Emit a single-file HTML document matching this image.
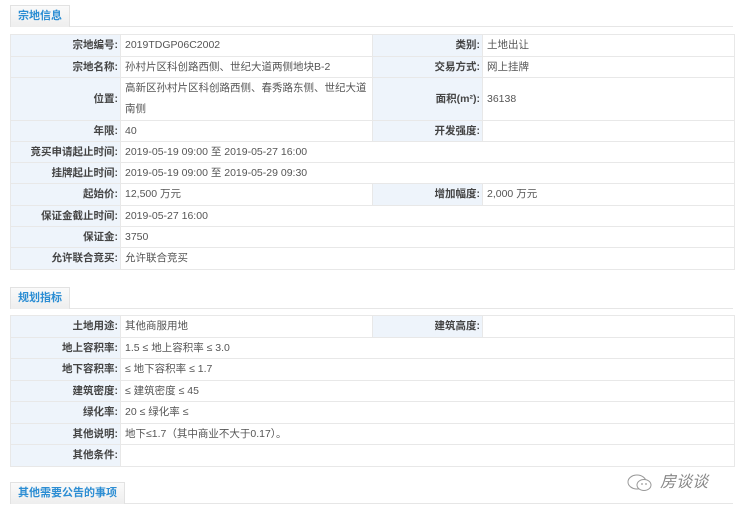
<!DOCTYPE html>
<html><head><meta charset="utf-8"><style>
*{margin:0;padding:0;box-sizing:border-box}
body{width:740px;height:515px;background:#fff;font-family:"Liberation Sans","Noto Sans CJK SC",sans-serif;font-size:10.5px;color:#555;position:relative;overflow:hidden}
.tabbar{position:absolute;left:10px;width:723px;height:22px;border-bottom:1px solid #e6e6e6}
.tab{position:absolute;left:0;top:0;height:22px;padding:0 7px;line-height:21px;background:linear-gradient(#fafafa,#eeeeee);border:1px solid #e2e2e2;border-bottom:none;color:#2b8dd3;font-weight:bold;font-size:11px}
table{position:absolute;left:10px;width:724px;border-collapse:collapse;table-layout:fixed}
td{border:1px solid #e8e8e8;padding:0 4px;line-height:20px;vertical-align:middle;overflow:hidden}
td.l{background:#eef4fb;text-align:right;font-weight:bold;color:#444;padding-right:2px}
td.v{color:#555}
</style></head><body>
<div class="tabbar" style="top:5px"><div class="tab">宗地信息</div></div>
<table style="top:34px">
<colgroup><col style="width:110px"><col style="width:252px"><col style="width:110px"><col style="width:252px"></colgroup>
<tr style="height:21.5px"><td class="l">宗地编号:</td><td class="v">2019TDGP06C2002</td><td class="l">类别:</td><td class="v">土地出让</td></tr>
<tr style="height:21px"><td class="l">宗地名称:</td><td class="v">孙村片区科创路西侧、世纪大道两侧地块B-2</td><td class="l">交易方式:</td><td class="v">网上挂牌</td></tr>
<tr style="height:43px"><td class="l">位置:</td><td class="v" style="line-height:21px">高新区孙村片区科创路西侧、春秀路东侧、世纪大道南侧</td><td class="l">面积(m²):</td><td class="v">36138</td></tr>
<tr style="height:21px"><td class="l">年限:</td><td class="v">40</td><td class="l">开发强度:</td><td class="v"></td></tr>
<tr style="height:21.5px"><td class="l">竞买申请起止时间:</td><td class="v" colspan="3">2019-05-19 09:00 至 2019-05-27 16:00</td></tr>
<tr style="height:21px"><td class="l">挂牌起止时间:</td><td class="v" colspan="3">2019-05-19 09:00 至 2019-05-29 09:30</td></tr>
<tr style="height:21.5px"><td class="l">起始价:</td><td class="v">12,500 万元</td><td class="l">增加幅度:</td><td class="v">2,000 万元</td></tr>
<tr style="height:21px"><td class="l">保证金截止时间:</td><td class="v" colspan="3">2019-05-27 16:00</td></tr>
<tr style="height:21.5px"><td class="l">保证金:</td><td class="v" colspan="3">3750</td></tr>
<tr style="height:21.5px"><td class="l">允许联合竞买:</td><td class="v" colspan="3">允许联合竞买</td></tr>
</table>
<div class="tabbar" style="top:287px"><div class="tab">规划指标</div></div>
<table style="top:315px">
<colgroup><col style="width:110px"><col style="width:252px"><col style="width:110px"><col style="width:252px"></colgroup>
<tr style="height:21.5px"><td class="l">土地用途:</td><td class="v">其他商服用地</td><td class="l">建筑高度:</td><td class="v"></td></tr>
<tr style="height:21.5px"><td class="l">地上容积率:</td><td class="v" colspan="3">1.5 ≤ 地上容积率 ≤ 3.0</td></tr>
<tr style="height:21.5px"><td class="l">地下容积率:</td><td class="v" colspan="3">≤ 地下容积率 ≤ 1.7</td></tr>
<tr style="height:21.5px"><td class="l">建筑密度:</td><td class="v" colspan="3">≤ 建筑密度 ≤ 45</td></tr>
<tr style="height:21.5px"><td class="l">绿化率:</td><td class="v" colspan="3">20 ≤ 绿化率 ≤</td></tr>
<tr style="height:21.5px"><td class="l">其他说明:</td><td class="v" colspan="3">地下≤1.7（其中商业不大于0.17）。</td></tr>
<tr style="height:21.5px"><td class="l">其他条件:</td><td class="v" colspan="3"></td></tr>
</table>
<div class="tabbar" style="top:482px"><div class="tab">其他需要公告的事项</div></div>
<div style="position:absolute;left:626px;top:471px;width:110px;height:24px;background:#fff;color:#888;font-size:16px;line-height:24px">
<svg width="30" height="20" viewBox="0 0 30 20" style="vertical-align:middle"><ellipse cx="11" cy="9" rx="9" ry="7" fill="none" stroke="#999" stroke-width="1"/><ellipse cx="18" cy="12" rx="7" ry="5.5" fill="#fff" stroke="#999" stroke-width="1"/><circle cx="16" cy="11" r="0.9" fill="#999"/><circle cx="20" cy="11" r="0.9" fill="#999"/></svg><span style="margin-left:4px;font-style:italic">房谈谈</span></div>
</body></html>
